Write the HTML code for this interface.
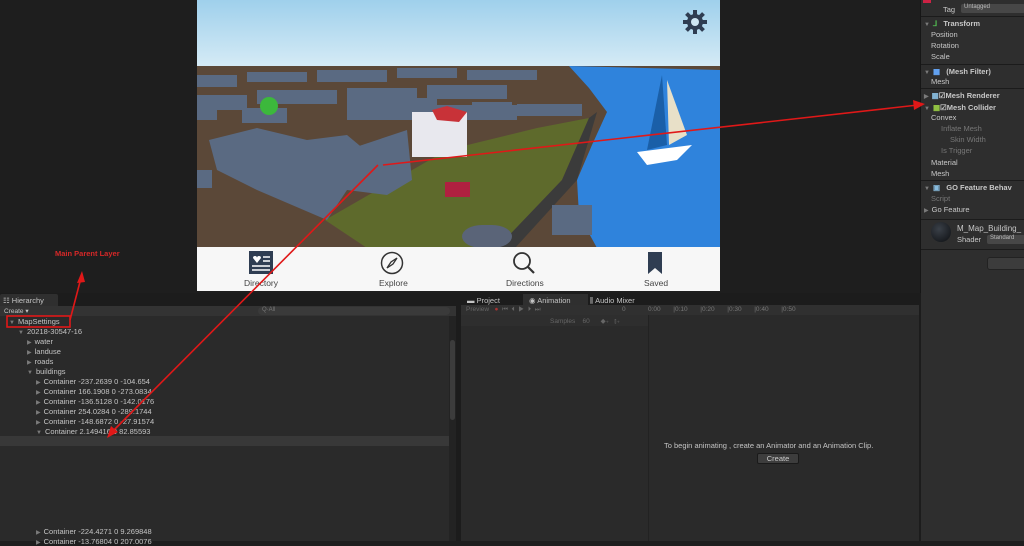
<!DOCTYPE html>
<html><head><meta charset="utf-8">
<style>
*{margin:0;padding:0;box-sizing:border-box}
body{width:1024px;height:541px;overflow:hidden;background:#1e1e1e;font-family:"Liberation Sans",sans-serif;position:relative;color:#bdbdbd}
.a{position:absolute}
.t{position:absolute;font-size:7.5px;white-space:nowrap;color:#c4c4c4}
.tri{color:#7a7a7a;font-size:6px;margin-right:3px}
.ins{font-size:7.5px;color:#c8c8c8;position:absolute;left:10px;white-space:nowrap}
.dim{color:#777}
.hdr{font-weight:bold}
.sep{position:absolute;left:0;width:104px;height:1px;background:#1b1b1b}
</style></head><body>

<!-- game view -->
<div class="a" style="left:197px;top:0;width:523px;height:291px;background:#fff;overflow:hidden">
<svg width="523" height="248" viewBox="0 0 523 248" style="position:absolute;left:0;top:0">
<defs><linearGradient id="sk" x1="0" y1="0" x2="0" y2="1"><stop offset="0" stop-color="#9fd0ec"/><stop offset="1" stop-color="#d8ecf6"/></linearGradient></defs>
<rect width="523" height="70" fill="url(#sk)"/>
<rect y="66" width="523" height="182" fill="#5b4838"/>
<polygon points="372,66 523,70 523,248 400,248 382,215 380,180 395,145 410,112 392,88" fill="#2f83dc"/>
<polygon points="128,220 250,150 340,128 392,118 365,180 300,248 170,248" fill="#5e6a2c"/>
<polygon points="300,248 365,180 392,118 400,112 380,180 318,248" fill="#3b3b3b"/>
<g fill="#5a6a82">
<rect x="0" y="75" width="40" height="12"/><rect x="50" y="72" width="60" height="10"/><rect x="120" y="70" width="70" height="12"/>
<rect x="200" y="68" width="60" height="10"/><rect x="270" y="70" width="70" height="10"/>
<rect x="0" y="95" width="50" height="15"/><rect x="60" y="90" width="80" height="14"/><rect x="150" y="88" width="70" height="12"/>
<rect x="230" y="85" width="80" height="14"/><rect x="0" y="100" width="20" height="20"/>
<rect x="150" y="98" width="90" height="22"/>
<rect x="200" y="105" width="120" height="15"/>
<rect x="275" y="102" width="40" height="15"/>
<rect x="320" y="104" width="65" height="12"/>
<rect x="45" y="108" width="45" height="15"/>
<polygon points="12,140 60,128 110,140 150,135 180,160 150,190 130,220 60,190 20,170"/>
<polygon points="150,150 210,130 215,180 190,195 150,190"/>
<rect x="355" y="205" width="40" height="30"/>
<rect x="0" y="170" width="15" height="18"/>
</g>
<rect x="215" y="112" width="55" height="45" fill="#e8e8ee"/>
<polygon points="235,110 250,106 270,112 262,122 240,120" fill="#c83238"/>
<rect x="248" y="182" width="25" height="15" fill="#b02040"/>
<rect x="265" y="225" width="50" height="23" rx="20" fill="#5a6478"/>
<circle cx="72" cy="106" r="9" fill="#3cb83c"/>
<path d="M465 75 L450 150 L470 145 Z" fill="#1a5fa8"/><path d="M470 80 L472 145 L490 135 Z" fill="#e8e0c8"/>
<polygon points="440,152 495,145 480,160 450,165" fill="#fff"/>
<g transform="translate(498,22)" fill="#2f3d52"><circle r="8"/><g stroke="#2f3d52" stroke-width="4"><line x1="-12" y1="0" x2="12" y2="0"/><line x1="0" y1="-12" x2="0" y2="12"/><line x1="-8.5" y1="-8.5" x2="8.5" y2="8.5"/><line x1="-8.5" y1="8.5" x2="8.5" y2="-8.5"/></g><circle r="4" fill="#cfe6f3"/></g>
</svg>
<div class="a" style="left:0;top:247px;width:523px;height:44px;background:#f7f7f7"></div>
<svg class="a" style="left:52px;top:251px" width="24" height="24"><rect width="24" height="23" fill="#2f3d52"/><path d="M4 7 a2 2 0 0 1 4 0 a2 2 0 0 1 4 0 l-4 5z" fill="#fff"/><g stroke="#fff" stroke-width="1.5"><line x1="14" y1="6" x2="21" y2="6"/><line x1="14" y1="10" x2="21" y2="10"/><line x1="3" y1="15" x2="21" y2="15"/><line x1="3" y1="19" x2="21" y2="19"/></g></svg>
<svg class="a" style="left:183px;top:251px" width="24" height="24"><circle cx="12" cy="12" r="10.5" fill="none" stroke="#333" stroke-width="1.5"/><path d="M17 7 L11 11 L7 17 L13 13Z" fill="none" stroke="#333" stroke-width="1.3"/></svg>
<svg class="a" style="left:315px;top:251px" width="24" height="24"><circle cx="10" cy="10" r="8" fill="none" stroke="#333" stroke-width="1.8"/><line x1="15.5" y1="15.5" x2="22" y2="22" stroke="#333" stroke-width="2.2"/></svg>
<svg class="a" style="left:451px;top:252px" width="14" height="22"><path d="M0 0H14V22L7 16L0 22Z" fill="#2f3d52"/></svg>
<div class="t" style="left:47px;top:278px;color:#444;font-size:8.5px">Directory</div>
<div class="t" style="left:182px;top:278px;color:#444;font-size:8.5px">Explore</div>
<div class="t" style="left:309px;top:278px;color:#444;font-size:8.5px">Directions</div>
<div class="t" style="left:447px;top:278px;color:#444;font-size:8.5px">Saved</div>
</div>

<!-- inspector -->
<div class="a" style="left:920px;top:0;width:104px;height:541px;background:#2e2e2e;border-left:1px solid #161616">
<div class="a" style="left:2px;top:0;width:8px;height:3px;background:#c24"></div>
<div class="ins" style="top:5px;left:22px">Tag</div><div class="a" style="left:40px;top:4px;width:64px;height:9px;background:#474747;border-radius:2px;font-size:6px;color:#bbb;padding-left:3px">Untagged</div>
<div class="sep" style="top:16px"></div>
<div class="ins hdr" style="top:19px;left:3px"><span class="tri">▼</span><span style="color:#5c5">⅃</span> &nbsp; Transform</div>
<div class="ins" style="top:30px;left:10px">Position</div>
<div class="ins" style="top:41px">Rotation</div>
<div class="ins" style="top:52px">Scale</div>
<div class="sep" style="top:64px"></div>
<div class="ins hdr" style="top:67px;left:3px"><span class="tri">▼</span><span style="color:#6af">▦</span> &nbsp; (Mesh Filter)</div>
<div class="ins" style="top:77px">Mesh</div>
<div class="sep" style="top:88px"></div>
<div class="ins hdr" style="top:91px;left:3px"><span class="tri">▶</span><span style="color:#8bd">▦</span>☑Mesh Renderer</div>
<div class="ins hdr" style="top:103px;left:3px"><span class="tri">▼</span><span style="color:#9c4">▦</span>☑Mesh Collider</div>
<div class="ins" style="top:113px">Convex</div>
<div class="ins dim" style="top:124px;left:20px">Inflate Mesh</div>
<div class="ins dim" style="top:135px;left:29px">Skin Width</div>
<div class="ins dim" style="top:146px;left:20px">Is Trigger</div>
<div class="ins" style="top:158px">Material</div>
<div class="ins" style="top:169px">Mesh</div>
<div class="sep" style="top:180px"></div>
<div class="ins hdr" style="top:183px;left:3px"><span class="tri">▼</span><span style="color:#8bd">▣</span> &nbsp; GO Feature Behav</div>
<div class="ins dim" style="top:194px">Script</div>
<div class="ins" style="top:205px;left:3px"><span class="tri">▶</span>Go Feature</div>
<div class="sep" style="top:219px"></div>
<div class="a" style="left:10px;top:222px;width:20px;height:20px;border-radius:50%;background:radial-gradient(circle at 40% 35%,#3a4048,#0d0f12)"></div>
<div class="ins" style="top:224px;left:36px;font-size:8px">M_Map_Building_</div>
<div class="ins" style="top:235px;left:36px">Shader</div><div class="a" style="left:66px;top:235px;width:38px;height:9px;background:#474747;font-size:6px;color:#bbb;padding-left:3px;border-radius:2px">Standard</div>
<div class="sep" style="top:249px"></div>
<div class="a" style="left:66px;top:257px;width:40px;height:13px;background:#3c3c3c;border-radius:3px;border:1px solid #222"></div>
</div>

<!-- hierarchy -->
<div class="a" style="left:0;top:293px;width:456px;height:248px;background:#2a2a2a"></div>
<div class="a" style="left:0;top:293px;width:456px;height:13px;background:#1c1c1c"></div>
<div class="a" style="left:0;top:294px;width:58px;height:12px;background:#2f2f2f;border-radius:2px 2px 0 0"></div>
<div class="t" style="left:3px;top:296px">☷ Hierarchy</div>
<div class="a" style="left:0;top:306px;width:456px;height:10px;background:#333"></div>
<div class="t" style="left:4px;top:307px;font-size:6.5px">Create ▾</div>
<div class="a" style="left:258px;top:307px;width:192px;height:8px;background:#3a3a3a;border-radius:4px"></div>
<div class="t" style="left:262px;top:307px;font-size:6px;color:#777">Q·All</div>
<div class="a" style="left:449px;top:316px;width:7px;height:225px;background:#232323"></div>
<div class="a" style="left:450px;top:340px;width:5px;height:80px;background:#3c3c3c;border-radius:3px"></div>
<div class="t" style="left:9px;top:317px"><span class="tri">▼</span>MapSettings</div>
<div class="t" style="left:18px;top:327px"><span class="tri">▼</span>20218-30547-16</div>
<div class="t" style="left:27px;top:337px"><span class="tri">▶</span>water</div>
<div class="t" style="left:27px;top:347px"><span class="tri">▶</span>landuse</div>
<div class="t" style="left:27px;top:357px"><span class="tri">▶</span>roads</div>
<div class="t" style="left:27px;top:367px"><span class="tri">▼</span>buildings</div>
<div class="t" style="left:36px;top:377px"><span class="tri">▶</span>Container -237.2639 0 -104.654</div>
<div class="t" style="left:36px;top:387px"><span class="tri">▶</span>Container 166.1908 0 -273.0834</div>
<div class="t" style="left:36px;top:397px"><span class="tri">▶</span>Container -136.5128 0 -142.0176</div>
<div class="t" style="left:36px;top:407px"><span class="tri">▶</span>Container 254.0284 0 -289.1744</div>
<div class="t" style="left:36px;top:417px"><span class="tri">▶</span>Container -148.6872 0 -27.91574</div>
<div class="t" style="left:36px;top:427px"><span class="tri">▼</span>Container 2.149416 0 82.85593</div>
<div class="a" style="left:0;top:436px;width:449px;height:10px;background:#383838"></div>
<div class="t" style="left:36px;top:527px"><span class="tri">▶</span>Container -224.4271 0 9.269848</div>
<div class="t" style="left:36px;top:537px"><span class="tri">▶</span>Container -13.76804 0 207.0076</div>
<div class="a" style="left:456px;top:293px;width:5px;height:248px;background:#1c1c1c"></div>

<!-- animation -->
<div class="a" style="left:461px;top:293px;width:458px;height:248px;background:#2a2a2a"></div>
<div class="a" style="left:461px;top:293px;width:458px;height:12px;background:#1c1c1c"></div>
<div class="a" style="left:523px;top:294px;width:65px;height:11px;background:#2f2f2f"></div>
<div class="t" style="left:467px;top:296px">▬ Project</div>
<div class="t" style="left:529px;top:296px">◉ Animation</div>
<div class="t" style="left:590px;top:296px">⫼ Audio Mixer</div>
<div class="a" style="left:461px;top:305px;width:458px;height:10px;background:#303030"></div>
<div class="t" style="left:466px;top:306px;font-size:6.5px;color:#666">Preview &nbsp; <span style="color:#a33">●</span> &nbsp;⏮ &nbsp;⏴ &nbsp;▶ &nbsp;⏵ &nbsp;⏭</div>
<div class="t" style="left:622px;top:306px;font-size:6.5px;color:#777">0</div>
<div class="t" style="left:648px;top:306px;font-size:6.5px;color:#777">0:00 &nbsp; &nbsp; &nbsp; |0:10 &nbsp; &nbsp; &nbsp; |0:20 &nbsp; &nbsp; &nbsp; |0:30 &nbsp; &nbsp; &nbsp; |0:40 &nbsp; &nbsp; &nbsp; |0:50</div>
<div class="a" style="left:461px;top:315px;width:187px;height:11px;background:#2e2e2e"></div>
<div class="t" style="left:550px;top:317px;font-size:6.5px;color:#666">Samples &nbsp; &nbsp;60 &nbsp; &nbsp; &nbsp;◆₊ &nbsp; ⫾₊</div>
<div class="a" style="left:648px;top:315px;width:1px;height:226px;background:#222"></div>
<div class="t" style="left:664px;top:441px;font-size:7.5px">To begin animating , create an Animator and an Animation Clip.</div>
<div class="a" style="left:757px;top:453px;width:42px;height:11px;background:#3d3d3d;border:1px solid #1a1a1a;border-radius:2px;font-size:7.5px;color:#ccc;text-align:center;line-height:9px">Create</div>
<div class="a" style="left:919px;top:293px;width:2px;height:248px;background:#1c1c1c"></div>

<div class="t" style="left:55px;top:249px;color:#d62828;font-weight:bold;font-size:7.5px">Main Parent Layer</div>

<svg class="a" style="left:0;top:0" width="1024" height="541">
<g stroke="#e01818" stroke-width="1.6" fill="none">
<rect x="7" y="316" width="63" height="11"/>
<line x1="70" y1="320" x2="81" y2="278"/>
<line x1="383" y1="165" x2="918" y2="105"/>
<line x1="378" y1="165" x2="112" y2="432"/>
</g>
<g fill="#e01818">
<polygon points="82,271 77,283 85,282"/>
<polygon points="925,104 913,100 914,110"/>
<polygon points="107,438 111,426 118,432"/>
</g>
</svg>
</body></html>
